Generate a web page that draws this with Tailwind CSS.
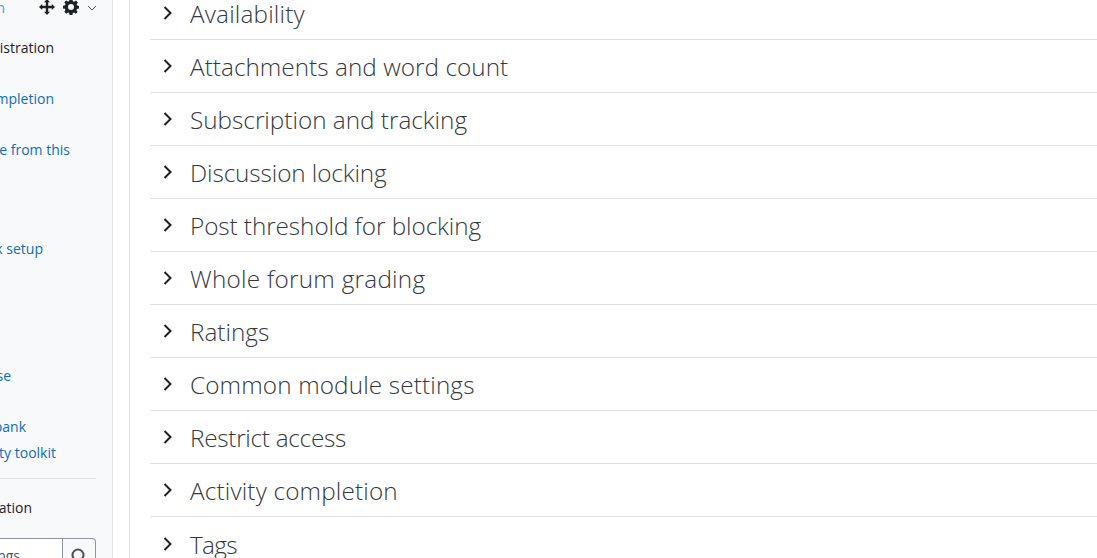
<!DOCTYPE html>
<html>
<head>
<meta charset="utf-8">
<script src="https://cdn.jsdelivr.net/npm/@tailwindcss/browser@4"></script>
</head>
<body class="m-0 overflow-hidden bg-white">
<div class="flex h-[558px] w-[1097px] overflow-hidden font-['Open_Sans',sans-serif] text-[#1d2125]">
  <aside class="h-full w-[113px] shrink-0 overflow-hidden border-r border-[#dee2e6] bg-[#f8f9fa] text-[14px] leading-5">
    <div class="flex h-[39px] items-start">
      <span class="-ml-[70px] -mt-[2px] w-[75px] text-right text-[#0f6cbf] opacity-70">Navigation</span>
      <svg class="ml-[34px] -mt-[1px] h-4 w-4 shrink-0" viewBox="0 0 16 16" fill="#1d2125"><path d="M8 0 11 3.2H9.2V6.8H12.8V5L16 8 12.8 11V9.2H9.2V12.8H11L8 16 5 12.8H6.8V9.2H3.2V11L0 8 3.2 5V6.8H6.8V3.2H5Z"/></svg>
      <svg class="ml-2 -mt-[1px] h-4 w-4 shrink-0" viewBox="0 0 16 16" fill="#1d2125"><path fill-rule="evenodd" d="M6.6 0H9.4L9.9 2.2 11 2.7 13 1.5 14.9 3.4 13.7 5.3 14.2 6.5 16 6.9V9.6L14 10 13.5 11.2 14.6 13 12.8 14.8 11 13.6 9.9 14.1 9.4 16H6.6L6.1 14 5 13.5 3.1 14.7 1.3 12.8 2.4 11 1.9 9.8 0 9.4V6.7L2 6.3 2.5 5.1 1.3 3.2 3.2 1.4 5 2.5 6.1 2ZM8 5A3 3 0 1 0 8 11 3 3 0 1 0 8 5Z"/></svg>
      <svg class="ml-2 mt-[3px] h-[10px] w-[10px] shrink-0" viewBox="0 0 10 10" fill="none" stroke="#495057" stroke-width="1"><path d="M1 3 5 7 9 3"/></svg>
    </div>
    <div class="-mt-[1px] flex flex-col whitespace-nowrap">
      <a class="-ml-[146px] block h-[51px] w-[200px] text-right">Forum administration</a>
      <a class="-ml-[146px] block h-[51px] w-[200px] text-right text-[#0f6cbf]">Activity completion</a>
      <a class="-ml-[130px] block h-[99px] w-[200px] text-right text-[#0f6cbf]">Unenrol me from this</a>
      <a class="-ml-[157px] block h-[127px] w-[200px] text-right text-[#0f6cbf]">Gradebook setup</a>
      <a class="-ml-[189px] block h-[51px] w-[200px] text-right text-[#0f6cbf]">Course</a>
      <a class="-ml-[174px] block h-[26px] w-[200px] text-right text-[#0f6cbf]">Question bank</a>
      <a class="-ml-[144px] block h-[35px] w-[200px] text-right text-[#0f6cbf]">Accessibility toolkit</a>
    </div>
    <div class="mr-4 border-t border-[#dee2e6]"></div>
    <div class="-ml-[168px] mt-[19px] w-[200px] whitespace-nowrap text-right">Navigation</div>
    <div class="mt-[20px] flex h-[40px] w-[96px]">
      <div class="h-full flex-1 border-y border-r border-[#8f959e] bg-white text-[#495057]"><span class="-ml-[180px] block w-[200px] whitespace-nowrap pt-[7px] text-right">Search settings</span></div>
      <div class="flex h-full w-[33px] justify-center rounded-tr-[4px] border-y border-r border-[#8f959e] bg-[#f8f9fa] pt-[9px]">
        <svg class="h-4 w-4" viewBox="0 0 16 16" fill="none" stroke="#495057" stroke-width="2"><circle cx="7" cy="7" r="5.5"/><path d="M11 11 15 15"/></svg>
      </div>
    </div>
  </aside>
  <div class="w-[16px] shrink-0"></div>
  <main class="min-w-0 flex-1 border-l border-[#dee2e6] pl-5">
    <div class="-mt-[13px] flex flex-col text-[24.3px] font-light leading-[36px] text-[#343a40]">
      <div class="flex h-[53px] items-center border-b border-[#dee2e6]"><svg class="ml-3 h-[16px] w-[12px] shrink-0" viewBox="0 0 12 16" fill="none" stroke="#1d2125" stroke-width="2"><path d="M2.5 2 8.5 8 2.5 14"/></svg><span class="ml-[16px] mt-[2px] tracking-[0.17px]">Availability</span></div>
      <div class="flex h-[53px] items-center border-b border-[#dee2e6]"><svg class="ml-3 h-[16px] w-[12px] shrink-0" viewBox="0 0 12 16" fill="none" stroke="#1d2125" stroke-width="2"><path d="M2.5 2 8.5 8 2.5 14"/></svg><span class="ml-[16px] mt-[2px] tracking-[0.04px]">Attachments and word count</span></div>
      <div class="flex h-[53px] items-center border-b border-[#dee2e6]"><svg class="ml-3 h-[16px] w-[12px] shrink-0" viewBox="0 0 12 16" fill="none" stroke="#1d2125" stroke-width="2"><path d="M2.5 2 8.5 8 2.5 14"/></svg><span class="ml-[16px] mt-[2px]">Subscription and tracking</span></div>
      <div class="flex h-[53px] items-center border-b border-[#dee2e6]"><svg class="ml-3 h-[16px] w-[12px] shrink-0" viewBox="0 0 12 16" fill="none" stroke="#1d2125" stroke-width="2"><path d="M2.5 2 8.5 8 2.5 14"/></svg><span class="ml-[16px] mt-[2px] tracking-[-0.1px]">Discussion locking</span></div>
      <div class="flex h-[53px] items-center border-b border-[#dee2e6]"><svg class="ml-3 h-[16px] w-[12px] shrink-0" viewBox="0 0 12 16" fill="none" stroke="#1d2125" stroke-width="2"><path d="M2.5 2 8.5 8 2.5 14"/></svg><span class="ml-[16px] mt-[2px] tracking-[-0.07px]">Post threshold for blocking</span></div>
      <div class="flex h-[53px] items-center border-b border-[#dee2e6]"><svg class="ml-3 h-[16px] w-[12px] shrink-0" viewBox="0 0 12 16" fill="none" stroke="#1d2125" stroke-width="2"><path d="M2.5 2 8.5 8 2.5 14"/></svg><span class="ml-[16px] mt-[2px] tracking-[0.26px]">Whole forum grading</span></div>
      <div class="flex h-[53px] items-center border-b border-[#dee2e6]"><svg class="ml-3 h-[16px] w-[12px] shrink-0" viewBox="0 0 12 16" fill="none" stroke="#1d2125" stroke-width="2"><path d="M2.5 2 8.5 8 2.5 14"/></svg><span class="ml-[16px] mt-[2px]">Ratings</span></div>
      <div class="flex h-[53px] items-center border-b border-[#dee2e6]"><svg class="ml-3 h-[16px] w-[12px] shrink-0" viewBox="0 0 12 16" fill="none" stroke="#1d2125" stroke-width="2"><path d="M2.5 2 8.5 8 2.5 14"/></svg><span class="ml-[16px] mt-[2px] tracking-[0.14px]">Common module settings</span></div>
      <div class="flex h-[53px] items-center border-b border-[#dee2e6]"><svg class="ml-3 h-[16px] w-[12px] shrink-0" viewBox="0 0 12 16" fill="none" stroke="#1d2125" stroke-width="2"><path d="M2.5 2 8.5 8 2.5 14"/></svg><span class="ml-[16px] mt-[2px] tracking-[-0.27px]">Restrict access</span></div>
      <div class="flex h-[53px] items-center border-b border-[#dee2e6]"><svg class="ml-3 h-[16px] w-[12px] shrink-0" viewBox="0 0 12 16" fill="none" stroke="#1d2125" stroke-width="2"><path d="M2.5 2 8.5 8 2.5 14"/></svg><span class="ml-[16px] mt-[2px] tracking-[0.16px]">Activity completion</span></div>
      <div class="flex h-[53px] items-center"><svg class="ml-3 h-[16px] w-[12px] shrink-0" viewBox="0 0 12 16" fill="none" stroke="#1d2125" stroke-width="2"><path d="M2.5 2 8.5 8 2.5 14"/></svg><span class="ml-[16px] mt-[2px] tracking-[-0.7px]">Tags</span></div>
    </div>
  </main>
</div>
</body>
</html>
